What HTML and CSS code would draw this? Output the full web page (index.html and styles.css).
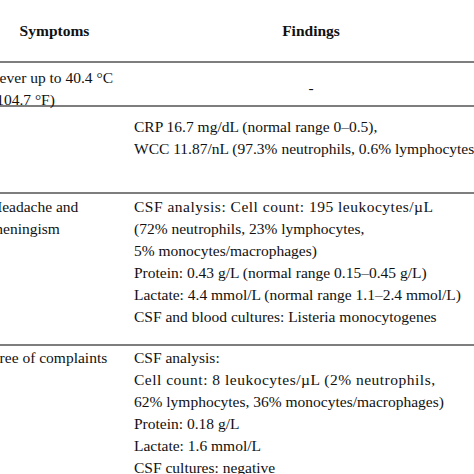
FILE: index.html
```html
<!DOCTYPE html>
<html>
<head>
<meta charset="utf-8">
<link rel="stylesheet" href="styles.css">
</head>
<body>
<div class="table">
  <div class="row head">
    <div class="c1">Symptoms</div>
    <div class="c2 center">Findings</div>
  </div>
  <div class="row r1">
    <div class="c1">Fever up to 40.4 °C<br>(104.7 °F)</div>
    <div class="c2 center mid">-</div>
  </div>
  <div class="row r2">
    <div class="c1"></div>
    <div class="c2">CRP 16.7 mg/dL (normal range 0–0.5),<br>WCC 11.87/nL (97.3% neutrophils, 0.6% lymphocytes)</div>
  </div>
  <div class="row r3">
    <div class="c1">Headache and<br>meningism</div>
    <div class="c2"><span class="wide">CSF analysis: Cell count: 195 leukocytes/µL</span><br>(72% neutrophils, 23% lymphocytes,<br>5% monocytes/macrophages)<br>Protein: 0.43 g/L (normal range 0.15–0.45 g/L)<br>Lactate: 4.4 mmol/L (normal range 1.1–2.4 mmol/L)<br>CSF and blood cultures: Listeria monocytogenes</div>
  </div>
  <div class="row r4">
    <div class="c1">Free of complaints</div>
    <div class="c2">CSF analysis:<br><span class="wide">Cell count: 8 leukocytes/µL (2% neutrophils,</span><br>62% lymphocytes, 36% monocytes/macrophages)<br>Protein: 0.18 g/L<br>Lactate: 1.6 mmol/L<br>CSF cultures: negative</div>
  </div>
</div>
</body>
</html>
```

FILE: styles.css
```css
html, body {
  margin: 0;
  padding: 0;
  background: #ffffff;
  overflow: hidden;
}
body {
  width: 474px;
  height: 474px;
}
.table {
  margin-left: -9px;
  width: 540px;
  font-family: "Liberation Serif", "Times New Roman", serif;
  font-size: 15.5px;
  line-height: 22px;
  color: #111111;
}
.row {
  display: grid;
  grid-template-columns: 127px 370px;
  border-bottom: 2px solid #7e7e7e;
  white-space: nowrap;
}
.c2 {
  padding-left: 16px;
  width: 354px;
}
.wide {
  letter-spacing: 0.5px;
}
.center {
  text-align: center;
}
.head {
  font-weight: bold;
  height: 61px;
  align-items: center;
}
.head .c1 {
  text-align: center;
}
.r1 {
  height: 38px;
  padding-top: 4px;
  align-items: start;
}
.r1 .mid {
  align-self: center;
  margin-top: -2px;
}
.r2 {
  padding-top: 9px;
  height: 76px;
}
.r3 {
  padding-top: 2px;
  height: 148px;
}
.r4 {
  padding-top: 1px;
  border-bottom: none;
}
```
